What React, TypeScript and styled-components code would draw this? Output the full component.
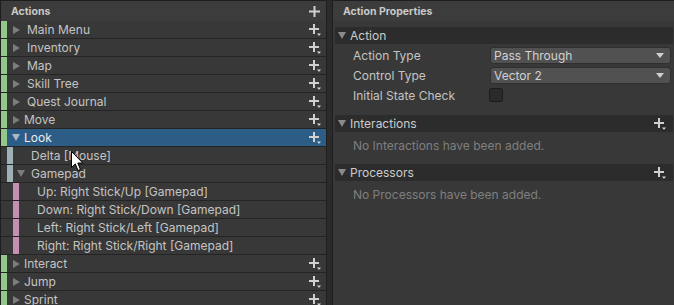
import React from "react";
import styled, { createGlobalStyle } from "styled-components";

const GlobalStyle = createGlobalStyle`
  html, body { margin: 0; padding: 0; background: #2a2a2a; }
  body {
    font-family: Inter, "Noto Sans", "Liberation Sans", sans-serif;
    font-size: 12px;
    color: #c4c4c4;
  }
  * { box-sizing: border-box; }
`;

const Window = styled.div`
  position: relative;
  display: flex;
  width: 674px;
  height: 305px;
  overflow: hidden;
  background: #2b2b2b;
`;

const LeftPanel = styled.section`
  flex: none;
  width: 327px;
  display: flex;
  flex-direction: column;
  background: #383838;
  border: 1px solid #1e1e1e;
  border-bottom: none;
  overflow: hidden;
`;

const Splitter = styled.div`
  flex: none;
  width: 5px;
  background: #2b2b2b;
`;

const RightPanel = styled.section`
  flex: 1;
  display: flex;
  flex-direction: column;
  background: #383838;
  border: 1px solid #1e1e1e;
  border-bottom: none;
  border-right: none;
  overflow: hidden;
`;

const PanelHeader = styled.header`
  flex: none;
  height: 20px;
  display: flex;
  align-items: center;
  padding-left: 10px;
  padding-right: 6px;
  background: #3c3c3c;
  font-size: 10.5px;
  font-weight: 700;
  color: #c8c8c8;
`;

const HeaderTitle = styled.span`
  flex: 1;
`;

const Row = styled.div<{ $selected?: boolean }>`
  flex: none;
  height: 18px;
  display: flex;
  align-items: center;
  border-bottom: 1px solid #242424;
  background: #383838;
  color: ${(p) => (p.$selected ? "#ececec" : "#c4c4c4")};
`;

const Bar = styled.div<{ $level: number; $color: string }>`
  flex: none;
  align-self: stretch;
  width: 6px;
  margin-left: ${(p) => p.$level * 6}px;
  background: ${(p) => p.$color};
`;

const RowBody = styled.div<{ $selected?: boolean }>`
  flex: 1;
  align-self: stretch;
  display: flex;
  align-items: center;
  background: ${(p) => (p.$selected ? "#2c5d87" : "transparent")};
`;

const Twisty = styled.span<{ $gap: number; $hidden?: boolean }>`
  flex: none;
  display: flex;
  align-items: center;
  justify-content: center;
  width: 8px;
  height: 10px;
  margin-left: ${(p) => p.$gap}px;
  visibility: ${(p) => (p.$hidden ? "hidden" : "visible")};
`;

const RowLabel = styled.span<{ $inset: number }>`
  flex: 1;
  margin-left: ${(p) => p.$inset}px;
  white-space: nowrap;
  line-height: 17px;
`;

const AddButton = styled.span`
  flex: none;
  display: flex;
  margin-right: 4px;
`;

const Section = styled.div<{ $gap: number }>`
  margin-top: ${(p) => p.$gap}px;
`;

const Band = styled.div`
  height: 17px;
  margin: 0 1px 0 2px;
  display: flex;
  align-items: center;
  padding-left: 3px;
  padding-right: 6px;
  background: #2c2c2c;
  color: #cdcdcd;
`;

const BandTitle = styled.span`
  flex: 1;
  margin-left: 4px;
`;

const Body = styled.div<{ $pad: number }>`
  padding-top: ${(p) => p.$pad}px;
`;

const FieldRow = styled.div`
  height: 20px;
  display: flex;
  align-items: center;
  padding-left: 20px;
`;

const FieldLabel = styled.span`
  flex: none;
  width: 137px;
  white-space: nowrap;
`;

const Dropdown = styled.div`
  flex: 1;
  height: 17px;
  margin-right: 3px;
  display: flex;
  align-items: center;
  padding: 0 6px 0 3px;
  border-radius: 3px;
  background: #515151;
  border: 1px solid #2f2f2f;
  color: #d2d2d2;
`;

const DropdownText = styled.span`
  flex: 1;
`;

const Checkbox = styled.span`
  width: 14px;
  height: 14px;
  margin-left: -1px;
  border-radius: 2px;
  background: #2a2a2a;
  border: 1px solid #1c1c1c;
`;

const Hint = styled.div`
  height: 20px;
  display: flex;
  align-items: center;
  padding-left: 20px;
  color: #7f7f7f;
`;

const Cursor = styled.svg`
  position: absolute;
  left: 71px;
  top: 151px;
`;

const Arrow = ({ open, color }: { open?: boolean; color: string }) =>
  open ? (
    <svg width="8" height="7" viewBox="0 0 8 7">
      <path d="M0 0 L8 0 L4 7 Z" fill={color} />
    </svg>
  ) : (
    <svg width="7" height="8" viewBox="0 0 7 8">
      <path d="M0 0 L7 4 L0 8 Z" fill={color} />
    </svg>
  );

const PlusIcon = () => (
  <svg width="11" height="11" viewBox="0 0 11 11">
    <rect x="4.5" y="0" width="2" height="11" fill="#d0d0d0" />
    <rect x="0" y="4.5" width="11" height="2" fill="#d0d0d0" />
  </svg>
);

const PlusMore = () => (
  <svg width="13" height="12" viewBox="0 0 13 12">
    <rect x="4" y="0" width="2" height="10" fill="#d0d0d0" />
    <rect x="0" y="4" width="10" height="2" fill="#d0d0d0" />
    <path d="M8 9.5 L12 9.5 L10.5 11.5 L9.5 11.5 Z" fill="#d0d0d0" />
  </svg>
);

type Item =
  | { kind: "action"; label: string; inset: number; open?: boolean; selected?: boolean }
  | { kind: "binding"; label: string; level: number; open?: boolean; composite?: boolean };

const GREEN = "#92c98a";
const BIND = "#9db2b6";
const PART = "#c48fb0";

const items: Item[] = [
  { kind: "action", label: "Main Menu", inset: 7 },
  { kind: "action", label: "Inventory", inset: 7 },
  { kind: "action", label: "Map", inset: 7 },
  { kind: "action", label: "Skill Tree", inset: 7 },
  { kind: "action", label: "Quest Journal", inset: 7 },
  { kind: "action", label: "Move", inset: 4 },
  { kind: "action", label: "Look", inset: 4, open: true, selected: true },
  { kind: "binding", label: "Delta [Mouse]", level: 1 },
  { kind: "binding", label: "Gamepad", level: 1, open: true, composite: true },
  { kind: "binding", label: "Up: Right Stick/Up [Gamepad]", level: 2 },
  { kind: "binding", label: "Down: Right Stick/Down [Gamepad]", level: 2 },
  { kind: "binding", label: "Left: Right Stick/Left [Gamepad]", level: 2 },
  { kind: "binding", label: "Right: Right Stick/Right [Gamepad]", level: 2 },
  { kind: "action", label: "Interact", inset: 4 },
  { kind: "action", label: "Jump", inset: 4 },
  { kind: "action", label: "Sprint", inset: 4 },
];

const TreeRow = ({ item }: { item: Item }) => {
  if (item.kind === "action") {
    return (
      <Row $selected={item.selected}>
        <Bar $level={0} $color={GREEN} />
        <RowBody $selected={item.selected}>
          <Twisty $gap={5}>
            <Arrow open={item.open} color={item.selected ? "#a9b9c8" : "#7d7d7d"} />
          </Twisty>
          <RowLabel $inset={item.inset}>{item.label}</RowLabel>
          <AddButton>
            <PlusMore />
          </AddButton>
        </RowBody>
      </Row>
    );
  }
  return (
    <Row>
      <Bar $level={item.level} $color={item.level === 1 ? BIND : PART} />
      <RowBody>
        <Twisty $gap={4} $hidden={!item.composite}>
          <Arrow open color="#7d7d7d" />
        </Twisty>
        <RowLabel $inset={6}>{item.label}</RowLabel>
      </RowBody>
    </Row>
  );
};

const Caret = () => (
  <svg width="8" height="5" viewBox="0 0 8 5">
    <path d="M0 0 L8 0 L4 5 Z" fill="#d0d0d0" />
  </svg>
);

export default function App() {
  return (
    <>
      <GlobalStyle />
      <Window>
        <LeftPanel>
          <PanelHeader>
            <HeaderTitle>Actions</HeaderTitle>
            <PlusIcon />
          </PanelHeader>
          {items.map((it) => (
            <TreeRow key={it.label} item={it} />
          ))}
        </LeftPanel>
        <Splitter />
        <RightPanel>
          <PanelHeader>
            <HeaderTitle>Action Properties</HeaderTitle>
          </PanelHeader>
          <Section $gap={6}>
            <Band>
              <Arrow open color="#8a8a8a" />
              <BandTitle>Action</BandTitle>
            </Band>
            <Body $pad={1}>
              <FieldRow>
                <FieldLabel>Action Type</FieldLabel>
                <Dropdown>
                  <DropdownText>Pass Through</DropdownText>
                  <Caret />
                </Dropdown>
              </FieldRow>
              <FieldRow>
                <FieldLabel>Control Type</FieldLabel>
                <Dropdown>
                  <DropdownText>Vector 2</DropdownText>
                  <Caret />
                </Dropdown>
              </FieldRow>
              <FieldRow>
                <FieldLabel>Initial State Check</FieldLabel>
                <Checkbox />
              </FieldRow>
            </Body>
          </Section>
          <Section $gap={10}>
            <Band>
              <Arrow open color="#8a8a8a" />
              <BandTitle>Interactions</BandTitle>
              <PlusMore />
            </Band>
            <Body $pad={3}>
              <Hint>No Interactions have been added.</Hint>
            </Body>
          </Section>
          <Section $gap={9}>
            <Band>
              <Arrow open color="#8a8a8a" />
              <BandTitle>Processors</BandTitle>
              <PlusMore />
            </Band>
            <Body $pad={3}>
              <Hint>No Processors have been added.</Hint>
            </Body>
          </Section>
        </RightPanel>
        <Cursor width="13" height="21" viewBox="0 0 13 21">
          <path
            d="M0.5 0.5 L0.5 16.5 L4.3 12.9 L7 19.5 L9.4 18.5 L6.8 12 L11.8 12 Z"
            fill="#ffffff"
            stroke="#000000"
            strokeWidth="1"
            strokeLinejoin="round"
          />
        </Cursor>
      </Window>
    </>
  );
}
